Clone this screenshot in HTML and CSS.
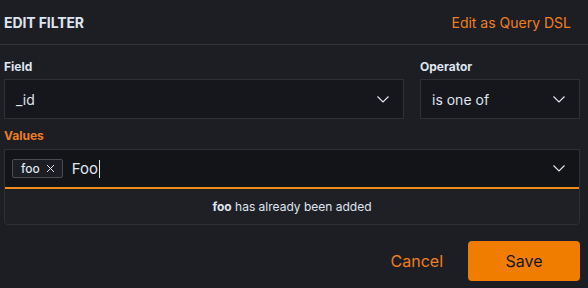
FILE: index.html
```html
<!DOCTYPE html>
<html>
<head>
<meta charset="utf-8">
<link rel="stylesheet" href="styles.css">
</head>
<body>
<div class="panel">
  <div class="header">
    <div class="title">EDIT FILTER</div>
    <a class="link">Edit as Query DSL</a>
  </div>
  <div class="form">
    <div class="row">
      <div class="field grow">
        <div class="label">Field</div>
        <div class="select">
          <span class="value">_id</span>
          <svg class="chev" width="12" height="7" viewBox="0 0 12 7"><path d="M0.5 0.5 L6 6 L11.5 0.5" fill="none" stroke="#dfe5ef" stroke-width="1.2"/></svg>
        </div>
      </div>
      <div class="field op">
        <div class="label">Operator</div>
        <div class="select">
          <span class="value">is one of</span>
          <svg class="chev" width="12" height="7" viewBox="0 0 12 7"><path d="M0.5 0.5 L6 6 L11.5 0.5" fill="none" stroke="#dfe5ef" stroke-width="1.2"/></svg>
        </div>
      </div>
    </div>
    <div class="field">
      <div class="label active">Values</div>
      <div class="combo">
        <div class="combo-input">
          <span class="chip">foo <svg width="9" height="9" viewBox="0 0 9 9"><path d="M1 1 L8 8 M8 1 L1 8" stroke="#dfe5ef" stroke-width="1"/></svg></span>
          <span class="typed">Foo</span><span class="caret"></span>
          <svg class="chev" width="12" height="7" viewBox="0 0 12 7"><path d="M0.5 0.5 L6 6 L11.5 0.5" fill="none" stroke="#dfe5ef" stroke-width="1.2"/></svg>
        </div>
        <div class="combo-list"><b>foo</b>&nbsp;has already been added</div>
      </div>
    </div>
  </div>
  <div class="footer">
    <a class="cancel">Cancel</a>
    <button class="save">Save</button>
  </div>
</div>
</body>
</html>
```
FILE: styles.css
```css
html, body {
  margin: 0;
  padding: 0;
  background: #1d1e24;
  font-family: Inter, "Noto Sans", sans-serif;
  color: #dfe5ef;
}
.panel {
  width: 588px;
  height: 288px;
  box-sizing: border-box;
}
.header {
  height: 44px;
  display: flex;
  align-items: center;
  justify-content: space-between;
  padding: 0 17px 0 4px;
  border-bottom: 1px solid #33343a;
}
.title {
  font-weight: 700;
  font-size: 14px;
  letter-spacing: -0.1px;
}
.link {
  color: #f07f1f;
  font-size: 14px;
}
.form {
  padding: 13px 8px 0 4px;
  display: flex;
  flex-direction: column;
  gap: 8px;
}
.row {
  display: flex;
  gap: 16px;
}
.grow { flex: 1; }
.op { width: 160px; }
.label {
  font-size: 12px;
  font-weight: 700;
  line-height: 18px;
  margin-bottom: 3px;
}
.label.active {
  color: #f07f1f;
  margin-bottom: 4px;
}
.select {
  height: 40px;
  box-sizing: border-box;
  border: 1px solid #303137;
  background: #16171c;
  display: flex;
  align-items: center;
  padding: 0 14px 0 11px;
  font-size: 14px;
}
.value { flex: 1; }
.chev { display: block; }
.combo {
  border: 1px solid #303137;
  border-radius: 0 0 4px 4px;
}
.combo-input {
  height: 37px;
  background: #131418;
  display: flex;
  align-items: center;
  padding: 0 14px 0 7px;
  border-bottom: 2px solid #f08a1a;
}
.chip {
  display: inline-flex;
  align-items: center;
  gap: 6px;
  height: 19px;
  box-sizing: border-box;
  border: 1px solid #4b4d55;
  border-radius: 2px;
  padding: 0 7px 0 8px;
  font-size: 12px;
  font-weight: 500;
  background: #1d1e24;
}
.typed {
  margin-left: 9px;
  font-size: 15px;
}
.caret {
  width: 1px;
  height: 18px;
  background: #dfe5ef;
  margin-left: 1px;
}
.combo-input .chev { margin-left: auto; }
.combo-list {
  height: 35px;
  display: flex;
  align-items: center;
  justify-content: center;
  font-size: 12px;
  background: #1f2026;
  border-radius: 0 0 4px 4px;
}
.combo-list b { font-weight: 700; }
.footer {
  display: flex;
  justify-content: flex-end;
  align-items: center;
  gap: 25px;
  padding: 16px 8px 0 0;
}
.cancel {
  color: #f07f1f;
  font-size: 16px;
}
.save {
  width: 112px;
  height: 40px;
  border: none;
  border-radius: 4px;
  background: #f07c00;
  color: #17181c;
  font-family: Inter, "Noto Sans", sans-serif;
  font-size: 16px;
  font-weight: 400;
}
```
